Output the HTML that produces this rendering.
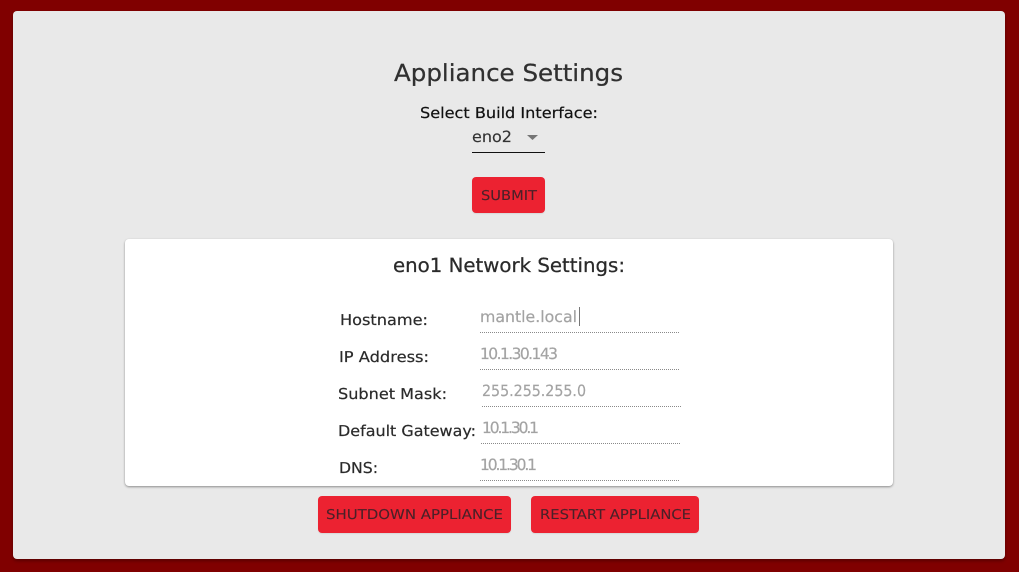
<!DOCTYPE html>
<html>
<head>
<meta charset="utf-8">
<style>
html,body{margin:0;padding:0;width:1019px;height:572px;overflow:hidden;background:#800000}
#c{position:absolute;left:13px;top:11px;width:992px;height:548px;background:#e9e9e9;border-radius:4px;box-shadow:0 2px 3px rgba(0,0,0,.3)}
#p{position:absolute;left:125px;top:239px;width:768px;height:247px;background:#fff;border-radius:4px;box-shadow:0 1px 2px rgba(0,0,0,.4)}
.b{position:absolute;background:#ec2231;border-radius:4px;box-shadow:0 1px 1px rgba(0,0,0,.08)}
svg{position:absolute;left:0;top:0}
text{font-family:"DejaVu Sans","Liberation Sans",sans-serif}
.l{font-size:15px;fill:#2a2a2a;stroke:#2a2a2a;stroke-width:.2px}
.v{font-size:15.5px;fill:#a3a3a3;stroke:#a3a3a3;stroke-width:.2px}
.t{font-size:13.5px;fill:#4a2028;stroke:#4a2028;stroke-width:.1px}
.d{stroke:#8a8a8a;stroke-width:1;stroke-dasharray:1 1}
</style>
</head>
<body>
<div id="c"></div>
<div id="p"></div>
<div class="b" style="left:472px;top:177px;width:73px;height:36px"></div>
<div class="b" style="left:318px;top:496px;width:193px;height:37px"></div>
<div class="b" style="left:531px;top:496px;width:168px;height:37px"></div>
<svg width="1019" height="572" viewBox="0 0 1019 572">
<g text-rendering="geometricPrecision">
<text x="394" y="81" font-size="23.5" fill="#303030" stroke="#303030" stroke-width=".25" textLength="229" lengthAdjust="spacingAndGlyphs">Appliance Settings</text>
<text x="420" y="118" font-size="15" fill="#111" stroke="#111" stroke-width=".2" textLength="178" lengthAdjust="spacingAndGlyphs">Select Build Interface:</text>
<text x="472" y="142" font-size="15.5" fill="#333" stroke="#333" stroke-width=".15" textLength="40" lengthAdjust="spacingAndGlyphs">eno2</text>
<text x="481" y="200" class="t" textLength="56" lengthAdjust="spacingAndGlyphs">SUBMIT</text>
<text x="393" y="272" font-size="19.5" fill="#2a2a2a" stroke="#2a2a2a" stroke-width=".25" textLength="232" lengthAdjust="spacingAndGlyphs">eno1 Network Settings:</text>
<text x="340" y="325" class="l" textLength="88" lengthAdjust="spacingAndGlyphs">Hostname:</text>
<text x="339" y="362" class="l" textLength="90" lengthAdjust="spacingAndGlyphs">IP Address:</text>
<text x="338" y="399" class="l" textLength="109" lengthAdjust="spacingAndGlyphs">Subnet Mask:</text>
<text x="338" y="436" class="l" textLength="138" lengthAdjust="spacingAndGlyphs">Default Gateway:</text>
<text x="339" y="473" class="l" textLength="39" lengthAdjust="spacingAndGlyphs">DNS:</text>
<text x="480" y="322" class="v" textLength="97" lengthAdjust="spacingAndGlyphs">mantle.local</text>
<text x="480" y="359" class="v" textLength="78" lengthAdjust="spacing">10.1.30.143</text>
<text x="482" y="396" class="v" textLength="104" lengthAdjust="spacingAndGlyphs">255.255.255.0</text>
<text x="482" y="433" class="v" textLength="57" lengthAdjust="spacing">10.1.30.1</text>
<text x="480" y="470" class="v" textLength="57" lengthAdjust="spacing">10.1.30.1</text>
<text x="326" y="519" class="t" textLength="177" lengthAdjust="spacingAndGlyphs">SHUTDOWN APPLIANCE</text>
<text x="540" y="519" class="t" textLength="151" lengthAdjust="spacingAndGlyphs">RESTART APPLIANCE</text>
</g>
<path d="M527 135H538L532.5 140Z" fill="#757575"/>
<rect x="472" y="152" width="73" height="1" fill="#111"/>
<rect x="579" y="307" width="1" height="19" fill="#777"/>
<line class="d" x1="480" y1="332.5" x2="679" y2="332.5"/>
<line class="d" x1="480" y1="369.5" x2="679" y2="369.5"/>
<line class="d" x1="482" y1="406.5" x2="681" y2="406.5"/>
<line class="d" x1="481" y1="443.5" x2="680" y2="443.5"/>
<line class="d" x1="480" y1="480.5" x2="679" y2="480.5"/>
</svg>
</body>
</html>
